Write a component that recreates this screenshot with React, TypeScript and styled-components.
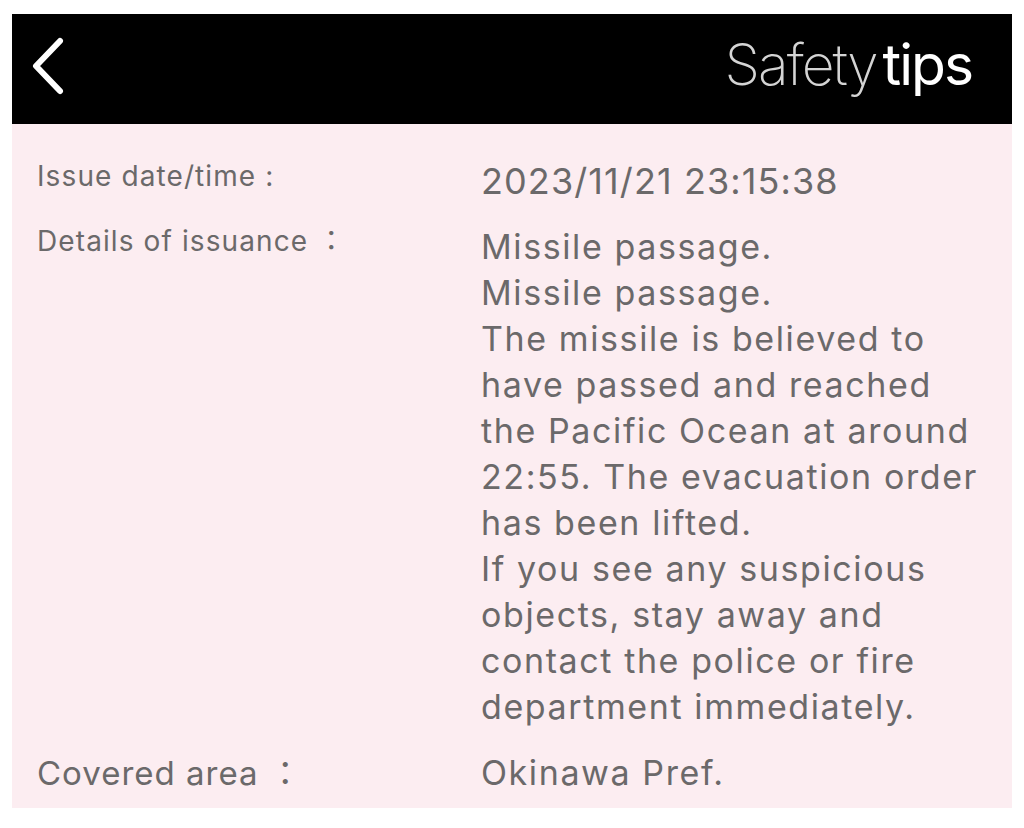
import React from "react";
import styled, { createGlobalStyle } from "styled-components";

const Global = createGlobalStyle`
  html, body { margin: 0; padding: 0; background: #ffffff; }
  body { font-family: Inter, "Noto Sans", "Liberation Sans", "Noto Sans CJK JP", sans-serif; }
`;

const Page = styled.div`
  width: 1024px;
  height: 828px;
  padding: 14px 12px 0 12px;
  box-sizing: border-box;
  background: #ffffff;
`;

const Panel = styled.div`
  width: 1000px;
  display: flex;
  flex-direction: column;
`;

const Header = styled.header`
  height: 110px;
  background: #000000;
  display: flex;
  align-items: center;
  justify-content: space-between;
  padding: 0 40px 0 16px;
  box-sizing: border-box;
`;

const BackButton = styled.button`
  background: none;
  border: none;
  padding: 0;
  display: flex;
  align-items: center;
  margin-top: -6px;
`;

const Title = styled.h1`
  margin: -10px 0 0 0;
  font-family: Inter, "Liberation Sans", sans-serif;
  font-size: 57px;
  line-height: 1;
  letter-spacing: -2px;
  color: #ffffff;
  font-weight: 400;
`;

const Light = styled.span`
  font-weight: 200;
  color: #d4d4d4;
  margin-right: 6px;
`;

const Body = styled.div`
  background: #fcedf1;
  display: grid;
  grid-template-columns: 444px 1fr;
  padding: 34px 0 12px 25px;
  color: #6b696a;
  font-family: Inter, "Noto Sans", "Noto Sans CJK JP", sans-serif;
`;

const Label = styled.div<{ $size: number; $top: number; $spacing: number }>`
  font-size: ${(p) => p.$size}px;
  letter-spacing: ${(p) => p.$spacing}px;
  line-height: 46px;
  margin-top: ${(p) => p.$top}px;
  white-space: nowrap;
`;

const Value = styled.div<{ $size: number; $top: number; $spacing: number }>`
  font-size: ${(p) => p.$size}px;
  letter-spacing: ${(p) => p.$spacing}px;
  line-height: 46px;
  margin-top: ${(p) => p.$top}px;
  white-space: nowrap;
`;

const Line = styled.span`
  display: block;
`;

const Chevron = () => (
  <svg width="40" height="60" viewBox="0 0 40 60" fill="none">
    <path
      d="M32 5 L8 30 L32 55"
      stroke="#ffffff"
      strokeWidth="6"
      strokeLinecap="round"
      strokeLinejoin="round"
    />
  </svg>
);

const details = [
  "Missile passage.",
  "Missile passage.",
  "The missile is believed to",
  "have passed and reached",
  "the Pacific Ocean at around",
  "22:55. The evacuation order",
  "has been lifted.",
  "If you see any suspicious",
  "objects, stay away and",
  "contact the police or fire",
  "department immediately.",
];

export default function App() {
  return (
    <>
      <Global />
      <Page>
        <Panel>
          <Header>
            <BackButton aria-label="Back">
              <Chevron />
            </BackButton>
            <Title>
              <Light>Safety</Light>tips
            </Title>
          </Header>
          <Body>
            <Label $size={28} $top={-5} $spacing={1.1}>Issue date/time :</Label>
            <Value $size={36} $top={0} $spacing={1.1}>2023/11/21 23:15:38</Value>
            <Label $size={28} $top={14} $spacing={1.1}>Details of issuance ：</Label>
            <Value $size={34} $top={20} $spacing={1.6}>
              {details.map((t, i) => (
                <Line key={i}>{t}</Line>
              ))}
            </Value>
            <Label $size={33} $top={20} $spacing={1}>Covered area ：</Label>
            <Value $size={34} $top={20} $spacing={1.6}>Okinawa Pref.</Value>
          </Body>
        </Panel>
      </Page>
    </>
  );
}
